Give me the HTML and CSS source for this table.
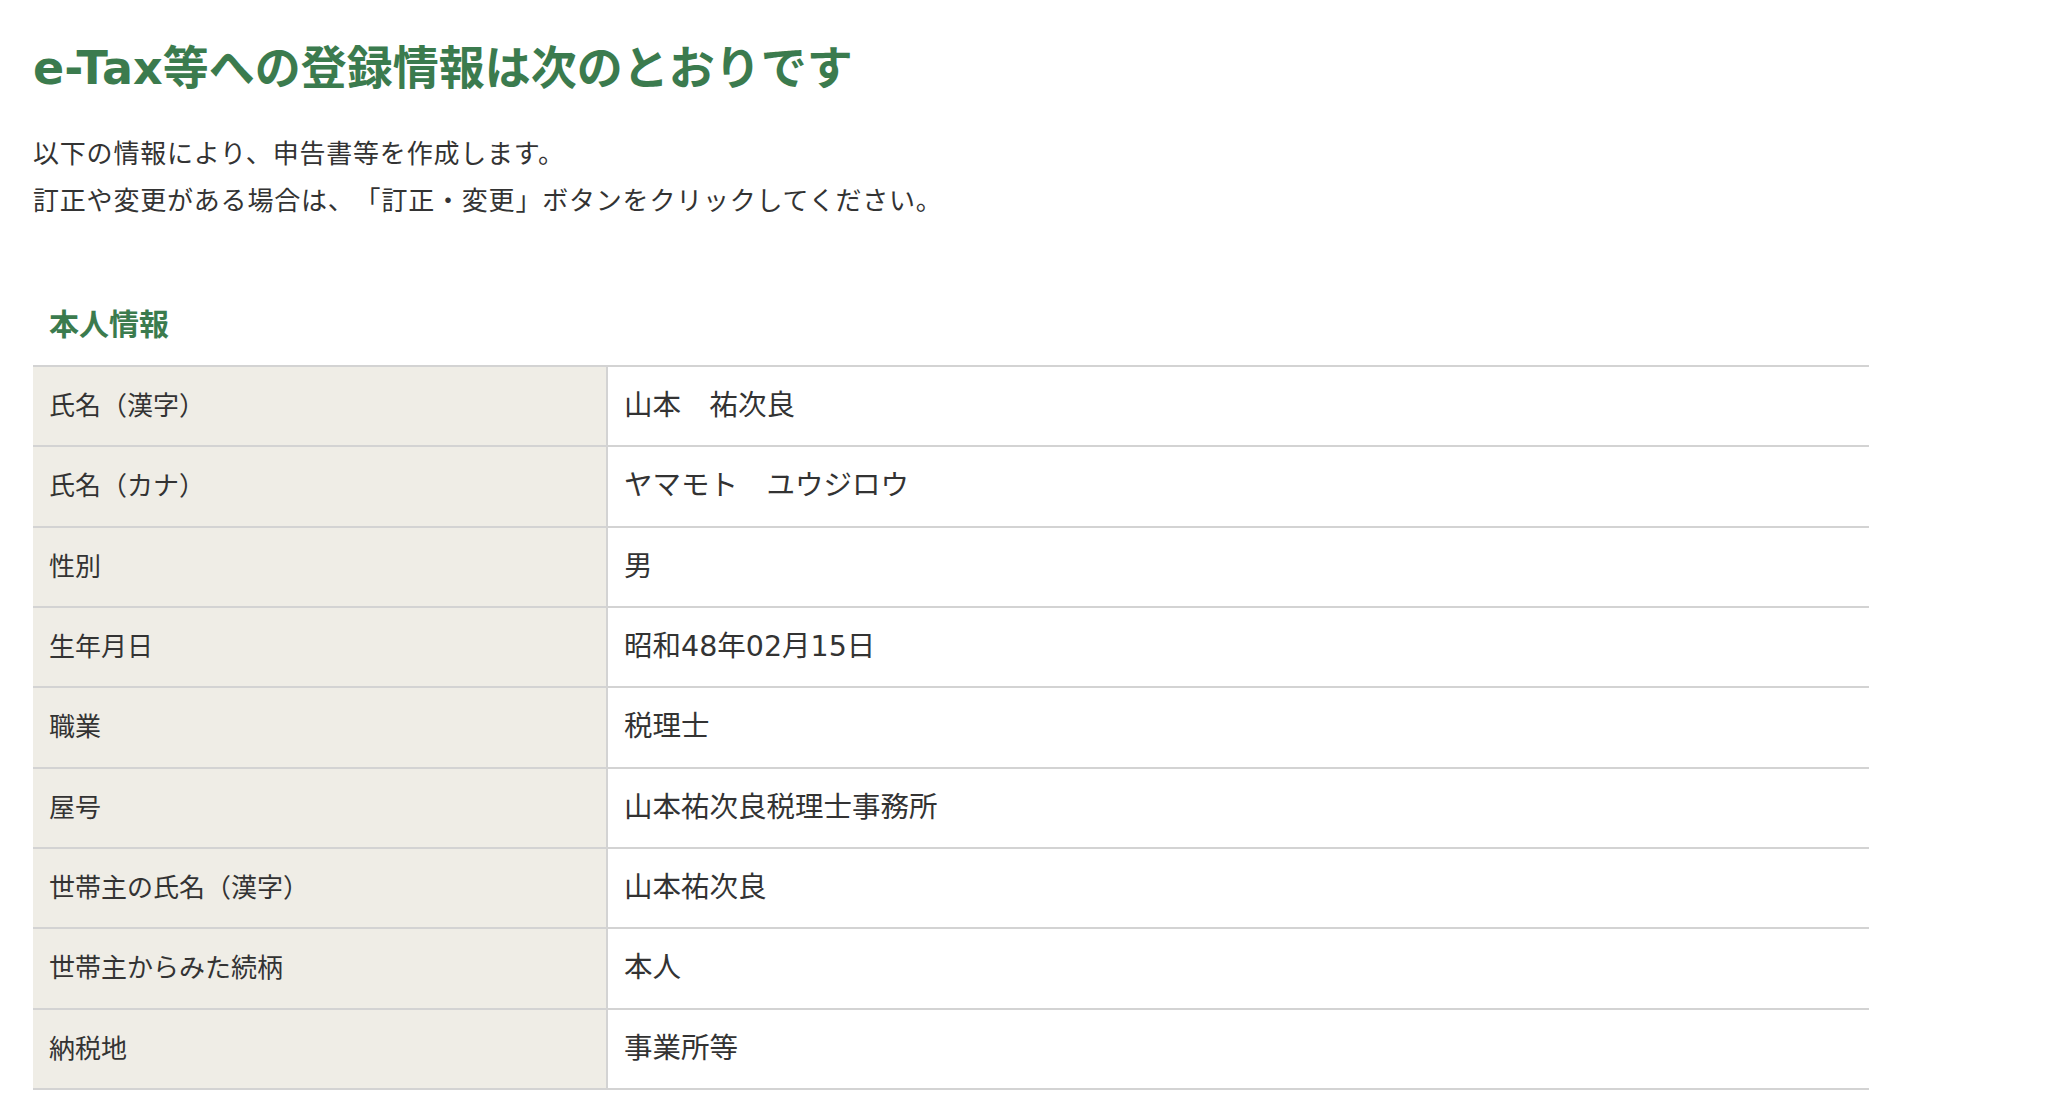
FILE: index.html
```html
<!DOCTYPE html>
<html lang="ja">
<head>
<meta charset="utf-8">
<title>e-Tax等への登録情報</title>
<link rel="stylesheet" href="styles.css">
</head>
<body>
<main class="page">
  <h1 class="title">e-Tax等への登録情報は次のとおりです</h1>
  <div class="lead">
    <p>以下の情報により、申告書等を作成します。</p>
    <p>訂正や変更がある場合は、「訂正・変更」ボタンをクリックしてください。</p>
  </div>
  <h2 class="section">本人情報</h2>
  <table class="info">
    <tr><th>氏名（漢字）</th><td>山本　祐次良</td></tr>
    <tr><th>氏名（カナ）</th><td>ヤマモト　ユウジロウ</td></tr>
    <tr><th>性別</th><td>男</td></tr>
    <tr><th>生年月日</th><td>昭和48年02月15日</td></tr>
    <tr><th>職業</th><td>税理士</td></tr>
    <tr><th>屋号</th><td>山本祐次良税理士事務所</td></tr>
    <tr><th>世帯主の氏名（漢字）</th><td>山本祐次良</td></tr>
    <tr><th>世帯主からみた続柄</th><td>本人</td></tr>
    <tr><th>納税地</th><td>事業所等</td></tr>
  </table>
</main>
</body>
</html>
```
FILE: styles.css
```css
html, body {
  margin: 0;
  padding: 0;
  background: #ffffff;
}
body {
  font-family: "Liberation Sans", "Noto Sans CJK JP", sans-serif;
  color: #333333;
  text-spacing-trim: space-all;
}
.page {
  padding: 31px 0 0 33px;
}
.title {
  margin: 0;
  font-family: "DejaVu Sans", "Noto Sans CJK JP", sans-serif;
  font-size: 46px;
  line-height: 74px;
  font-weight: 700;
  color: #3b7b4e;
  letter-spacing: 0;
}
.lead {
  margin-top: 26px;
}
.lead p {
  margin: 0;
  font-size: 26px;
  line-height: 47px;
  letter-spacing: 0.8px;
}
.section {
  margin: 78px 0 0 16px;
  font-size: 30px;
  line-height: 44px;
  font-weight: 700;
  color: #3b7b4e;
}
.info {
  margin-top: 18px;
  width: 1836px;
  border-collapse: collapse;
}
.info tr {
  height: 80.33px;
}
.info th,
.info td {
  border-top: 2px solid #d3d3d3;
  border-bottom: 2px solid #d3d3d3;
  padding: 0 16px 5px;
  text-align: left;
  font-weight: 400;
  vertical-align: middle;
}
.info th {
  width: 541px;
  font-size: 26px;
  background: #efede6;
  border-right: 2px solid #d3d3d3;
}
.info td {
  font-family: "DejaVu Sans", "Noto Sans CJK JP", sans-serif;
  font-size: 28.5px;
  padding-bottom: 7px;
  background: #ffffff;
}
```
